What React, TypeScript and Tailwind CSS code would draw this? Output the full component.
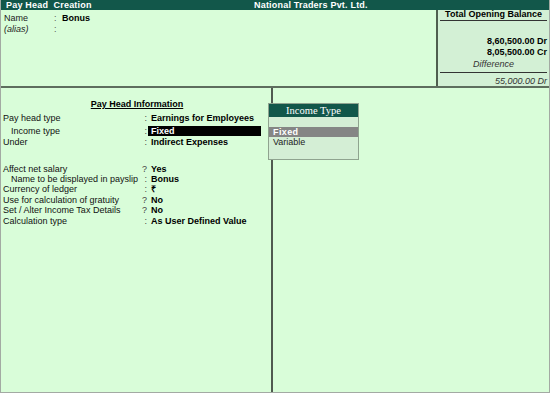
type Row = { label: string; sep: string; value: string; indent?: boolean; active?: boolean };

const headRows: Row[] = [
  { label: "Pay head type", sep: ":", value: "Earnings for Employees" },
  { label: "Income type", sep: ":", value: "Fixed", indent: true, active: true },
  { label: "Under", sep: ":", value: "Indirect Expenses" },
];

const detailRows: Row[] = [
  { label: "Affect net salary", sep: "?", value: "Yes" },
  { label: "Name to be displayed in payslip", sep: ":", value: "Bonus", indent: true },
  { label: "Currency of ledger", sep: ":", value: "₹" },
  { label: "Use for calculation of gratuity", sep: "?", value: "No" },
  { label: "Set / Alter Income Tax Details", sep: "?", value: "No" },
  { label: "Calculation type", sep: ":", value: "As User Defined Value" },
];

function FieldRow({ row, h }: { row: Row; h: string }) {
  return (
    <div className={`flex items-center leading-none ${h}`}>
      <span className={`w-[137px] shrink-0 text-[#111] ${row.indent ? "pl-[8px]" : ""}`}>
        {row.label}
      </span>
      <span className="w-[7px] shrink-0 text-right text-[#444]">{row.sep}</span>
      {row.active ? (
        <span className="ml-[1px] w-[113px] h-[10px] flex items-center bg-black text-white font-bold pl-[3px]">
          {row.value}
        </span>
      ) : (
        <span className="font-bold pl-[4px]">{row.value}</span>
      )}
    </div>
  );
}

export default function App() {
  return (
    <div
      className="w-[550px] h-[393px] flex flex-col bg-[#d9fdd9] border border-t-0 border-[#a3aaa3] text-[9px] text-black overflow-hidden"
      style={{ fontFamily: '"Liberation Sans", Arial, sans-serif' }}
    >
      {/* title bar */}
      <div className="h-[10px] shrink-0 bg-[#12574a] text-white font-bold flex items-center leading-none">
        <span className="w-[253px] pl-[5px] tracking-[0.2px]">Pay Head&nbsp; Creation</span>
        <span className="tracking-[0.2px]">National Traders Pvt. Ltd.</span>
      </div>

      {/* top section */}
      <div className="h-[78px] shrink-0 flex border-b-2 border-[#5e6e5e]">
        <div className="flex-1 pt-[3px] pl-[3px]">
          <div className="flex h-[11px] items-center leading-none">
            <span className="w-[50px] text-[#222]">Name</span>
            <span className="w-[8px] text-[#555]">:</span>
            <span className="font-bold">Bonus</span>
          </div>
          <div className="flex h-[11px] items-center leading-none">
            <span className="w-[50px] italic text-[#222]">(alias)</span>
            <span className="w-[8px] text-[#555]">:</span>
          </div>
        </div>
        <div className="w-[113px] bg-[#d3f0d5] border-l-2 border-[#4f5f4f] flex flex-col px-[2px] leading-none">
          <div className="h-[11px] flex items-end justify-center pb-[1px] border-b border-[#333] font-bold">
            Total Opening Balance
          </div>
          <div className="mt-[15px] h-[11px] flex items-center justify-end font-bold">
            8,60,500.00 Dr
          </div>
          <div className="h-[11px] flex items-center justify-end font-bold">8,05,500.00 Cr</div>
          <div className="h-[15px] pt-[2px] text-center italic text-[#333] border-b border-[#333]">
            Difference
          </div>
          <div className="pt-[4px] text-right italic text-[#333]">55,000.00 Dr</div>
        </div>
      </div>

      {/* lower section */}
      <div className="flex-1 flex relative">
        <div className="w-[272px] shrink-0 border-r-2 border-[#505a50] pl-[2px] pt-[12px]">
          <div className="text-center font-bold underline underline-offset-1 leading-none mb-[4px]">
            Pay Head Information
          </div>
          <FieldRow row={headRows[0]} h="h-[10px]" />
          <div className="h-[3px]" />
          <FieldRow row={headRows[1]} h="h-[10px]" />
          <FieldRow row={headRows[2]} h="h-[12px]" />
          <div className="h-[16px]" />
          {detailRows.map((r) => (
            <FieldRow key={r.label} row={r} h="h-[10.4px]" />
          ))}
        </div>
        <div className="flex-1" />

        {/* Income Type pick list */}
        <div className="absolute left-[267px] top-[15px] w-[91px] h-[57px] bg-[#d4eed5] border border-[#8fa38f]">
          <div
            className="h-[13px] bg-[#12574a] text-white text-[10.5px] text-center leading-[13px]"
            style={{ fontFamily: '"Liberation Serif", "Times New Roman", serif' }}
          >
            Income Type
          </div>
          <div className="h-[10px]" />
          <div className="h-[10px] bg-[#858585] text-white font-bold pl-[4px] leading-[10px] tracking-[0.4px]">
            Fixed
          </div>
          <div className="h-[11px] pl-[4px] leading-[11px] text-[#222]">Variable</div>
        </div>
      </div>
    </div>
  );
}
